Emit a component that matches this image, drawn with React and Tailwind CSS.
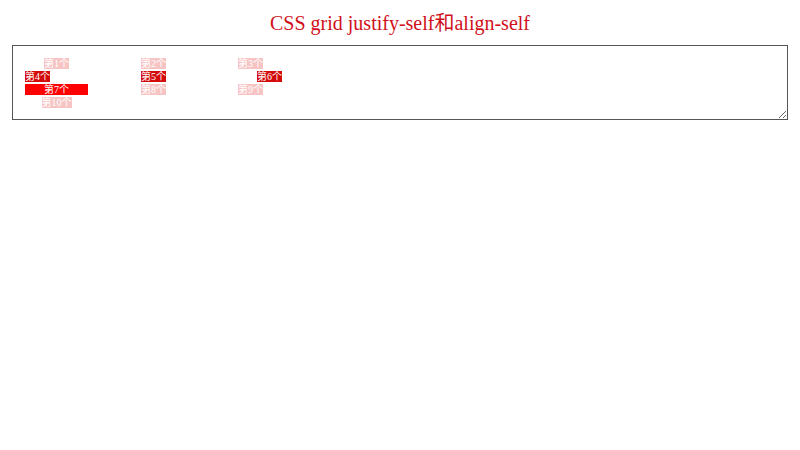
import React from "react";

// grid cells: label, justify-self, tone
const cells = [
  { label: "第1个", justify: "justify-self-center", tone: "light" },
  { label: "第2个", justify: "justify-self-start", tone: "light" },
  { label: "第3个", justify: "justify-self-start", tone: "light" },
  { label: "第4个", justify: "justify-self-start", tone: "dark" },
  { label: "第5个", justify: "justify-self-start", tone: "dark" },
  { label: "第6个", justify: "justify-self-end", tone: "dark" },
  { label: "第7个", justify: "justify-self-stretch", tone: "bright" },
  { label: "第8个", justify: "justify-self-start", tone: "light" },
  { label: "第9个", justify: "justify-self-start", tone: "light" },
  { label: "第10个", justify: "justify-self-center", tone: "light" },
];

const toneClass = {
  light: "bg-[#f7c4c4]",
  dark: "bg-[#d40b0b]",
  bright: "bg-[#ff0000]",
};

const App = () => {
  return (
    <div className="min-h-screen bg-white font-['Liberation_Serif','Noto_Sans_CJK_SC',serif]">
      <h1 className="pt-[10px] pb-[8px] text-center text-[20px] leading-[27px] text-[#d0101a]">
        CSS grid justify-self和align-self
      </h1>

      {/* resizable demo box */}
      <div className="mx-3 resize overflow-auto border border-[#555] px-3 pt-3 pb-[11px]">
        <div className="grid grid-cols-[63px_44px_44px] gap-x-[53px] gap-y-[2px] auto-rows-[11px]">
          {cells.map((c) => (
            <div
              key={c.label}
              className={`${c.justify} ${toneClass[c.tone]} text-center text-[10px] leading-[11px] text-white`}
            >
              {c.label}
            </div>
          ))}
        </div>
      </div>
    </div>
  );
};

export default App;
